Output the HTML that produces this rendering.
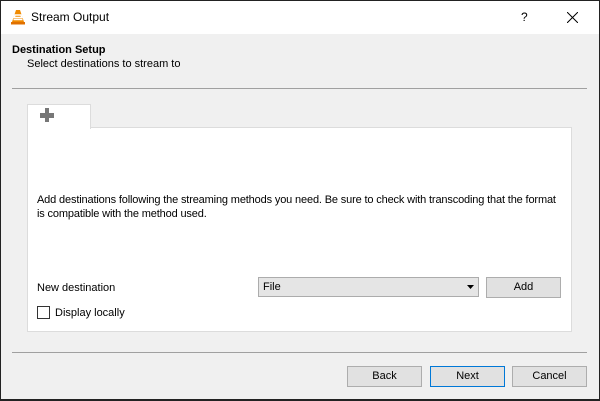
<!DOCTYPE html>
<html><head><style>
*{box-sizing:border-box;margin:0;padding:0}
body{width:600px;height:401px;overflow:hidden;background:#f0f0f0;font-family:"Liberation Sans",sans-serif;font-size:11px;color:#000;position:relative}
.a{position:absolute}
.frame{left:0;top:0;width:600px;height:401px;border:1px solid #222;border-bottom:2px solid #222}
.title{left:1px;top:1px;width:598px;height:33px;background:#fff}
.btn{background:#e1e1e1;border:1px solid #adadad;text-align:center;line-height:19px;font-size:11px}
</style></head><body>
<div class="a title"></div>
<svg class="a" style="left:10px;top:9px" width="16" height="16" viewBox="0 0 16 16"><path d="M6 1h4l4 12H2z" fill="#f08a00"/><path d="M5 6h6l.8 2.5H4.2zM3.5 10.5h9" stroke="#fff" stroke-width="1.5" fill="none"/><rect x="1" y="13" width="14" height="2.5" fill="#e07000"/></svg>
<div class="a" style="left:31px;top:10px;font-size:12px">Stream Output</div>
<div class="a" style="left:521px;top:10px;font-size:12px">?</div>
<svg class="a" style="left:567px;top:12px" width="11" height="11"><path d="M0 0L11 11M11 0L0 11" stroke="#000" stroke-width="1"/></svg>
<div class="a" style="left:12px;top:44px;font-weight:bold">Destination Setup</div>
<div class="a" style="left:27px;top:58px">Select destinations to stream to</div>
<div class="a" style="left:12px;top:88px;width:575px;height:1px;background:#a0a0a0"></div>
<div class="a" style="left:27px;top:127px;width:545px;height:205px;background:#fff;border:1px solid #dcdcdc"></div>
<div class="a" style="left:27px;top:104px;width:64px;height:25px;background:#fff;border:1px solid #dcdcdc;border-bottom:none"></div>
<div class="a" style="left:40px;top:113px;width:14px;height:5px;background:#777"></div>
<div class="a" style="left:45px;top:108px;width:4px;height:14px;background:#777"></div>
<div class="a" style="left:37px;top:193px;line-height:14px;white-space:nowrap;letter-spacing:-0.15px">Add destinations following the streaming methods you need. Be sure to check with transcoding that the format<br>is compatible with the method used.</div>
<div class="a" style="left:37px;top:282px">New destination</div>
<div class="a" style="left:258px;top:277px;width:221px;height:20px;background:#e5e5e5;border:1px solid #acacac;padding-left:4px;line-height:18px">File</div>
<svg class="a" style="left:467px;top:285px" width="7" height="4"><path d="M0 0h7L3.5 4z" fill="#000"/></svg>
<div class="a btn" style="left:486px;top:277px;width:75px;height:21px">Add</div>
<div class="a" style="left:37px;top:306px;width:13px;height:13px;background:#fff;border:1px solid #333"></div>
<div class="a" style="left:55px;top:307px">Display locally</div>
<div class="a" style="left:12px;top:352px;width:575px;height:1px;background:#a0a0a0"></div>
<div class="a btn" style="left:347px;top:366px;width:75px;height:21px">Back</div>
<div class="a btn" style="left:430px;top:366px;width:75px;height:21px;border:1px solid #0078d7">Next</div>
<div class="a btn" style="left:512px;top:366px;width:75px;height:21px">Cancel</div>
<div class="a frame"></div>
</body></html>
